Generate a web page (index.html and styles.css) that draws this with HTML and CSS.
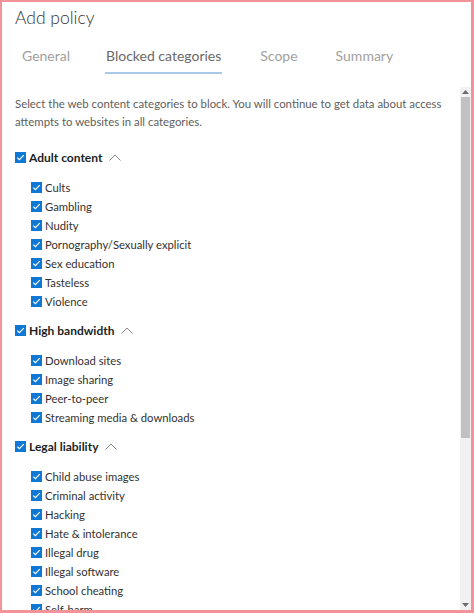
FILE: index.html
```html
<!DOCTYPE html>
<html>
<head>
<meta charset="utf-8">
<link rel="stylesheet" href="styles.css">
</head>
<body>
<div class="frame">
  <div class="head">
    <h1 class="title">Add policy</h1>
    <div class="tabs">
      <span class="tab">General</span>
      <span class="tab active">Blocked categories</span>
      <span class="tab">Scope</span>
      <span class="tab">Summary</span>
    </div>
  </div>
  <div class="main">
    <div class="content">
      <p class="desc">Select the web content categories to block. You will continue to get data about access attempts to websites in all categories.</p>

      <div class="group">
        <div class="ghead"><span class="cb"><svg viewBox="0 0 11 11"><path d="M2.3 5.6 L4.4 7.7 L8.8 3.2" /></svg></span><span class="glabel">Adult content</span><svg class="chev" viewBox="0 0 12 7"><path d="M0.5 6.5 L6 1 L11.5 6.5"/></svg></div>
        <ul class="items">
          <li><span class="cb"><svg viewBox="0 0 11 11"><path d="M2.3 5.6 L4.4 7.7 L8.8 3.2" /></svg></span>Cults</li>
          <li><span class="cb"><svg viewBox="0 0 11 11"><path d="M2.3 5.6 L4.4 7.7 L8.8 3.2" /></svg></span>Gambling</li>
          <li><span class="cb"><svg viewBox="0 0 11 11"><path d="M2.3 5.6 L4.4 7.7 L8.8 3.2" /></svg></span>Nudity</li>
          <li><span class="cb"><svg viewBox="0 0 11 11"><path d="M2.3 5.6 L4.4 7.7 L8.8 3.2" /></svg></span>Pornography/Sexually explicit</li>
          <li><span class="cb"><svg viewBox="0 0 11 11"><path d="M2.3 5.6 L4.4 7.7 L8.8 3.2" /></svg></span>Sex education</li>
          <li><span class="cb"><svg viewBox="0 0 11 11"><path d="M2.3 5.6 L4.4 7.7 L8.8 3.2" /></svg></span>Tasteless</li>
          <li><span class="cb"><svg viewBox="0 0 11 11"><path d="M2.3 5.6 L4.4 7.7 L8.8 3.2" /></svg></span>Violence</li>
        </ul>
      </div>

      <div class="group">
        <div class="ghead"><span class="cb"><svg viewBox="0 0 11 11"><path d="M2.3 5.6 L4.4 7.7 L8.8 3.2" /></svg></span><span class="glabel">High bandwidth</span><svg class="chev" viewBox="0 0 12 7"><path d="M0.5 6.5 L6 1 L11.5 6.5"/></svg></div>
        <ul class="items">
          <li><span class="cb"><svg viewBox="0 0 11 11"><path d="M2.3 5.6 L4.4 7.7 L8.8 3.2" /></svg></span>Download sites</li>
          <li><span class="cb"><svg viewBox="0 0 11 11"><path d="M2.3 5.6 L4.4 7.7 L8.8 3.2" /></svg></span>Image sharing</li>
          <li><span class="cb"><svg viewBox="0 0 11 11"><path d="M2.3 5.6 L4.4 7.7 L8.8 3.2" /></svg></span>Peer-to-peer</li>
          <li><span class="cb"><svg viewBox="0 0 11 11"><path d="M2.3 5.6 L4.4 7.7 L8.8 3.2" /></svg></span>Streaming media &amp; downloads</li>
        </ul>
      </div>

      <div class="group">
        <div class="ghead"><span class="cb"><svg viewBox="0 0 11 11"><path d="M2.3 5.6 L4.4 7.7 L8.8 3.2" /></svg></span><span class="glabel">Legal liability</span><svg class="chev" viewBox="0 0 12 7"><path d="M0.5 6.5 L6 1 L11.5 6.5"/></svg></div>
        <ul class="items">
          <li><span class="cb"><svg viewBox="0 0 11 11"><path d="M2.3 5.6 L4.4 7.7 L8.8 3.2" /></svg></span>Child abuse images</li>
          <li><span class="cb"><svg viewBox="0 0 11 11"><path d="M2.3 5.6 L4.4 7.7 L8.8 3.2" /></svg></span>Criminal activity</li>
          <li><span class="cb"><svg viewBox="0 0 11 11"><path d="M2.3 5.6 L4.4 7.7 L8.8 3.2" /></svg></span>Hacking</li>
          <li><span class="cb"><svg viewBox="0 0 11 11"><path d="M2.3 5.6 L4.4 7.7 L8.8 3.2" /></svg></span>Hate &amp; intolerance</li>
          <li><span class="cb"><svg viewBox="0 0 11 11"><path d="M2.3 5.6 L4.4 7.7 L8.8 3.2" /></svg></span>Illegal drug</li>
          <li><span class="cb"><svg viewBox="0 0 11 11"><path d="M2.3 5.6 L4.4 7.7 L8.8 3.2" /></svg></span>Illegal software</li>
          <li><span class="cb"><svg viewBox="0 0 11 11"><path d="M2.3 5.6 L4.4 7.7 L8.8 3.2" /></svg></span>School cheating</li>
          <li><span class="cb"><svg viewBox="0 0 11 11"><path d="M2.3 5.6 L4.4 7.7 L8.8 3.2" /></svg></span>Self-harm</li>
        </ul>
      </div>
    </div>
    <div class="scrollbar">
      <div class="sb-btn"><svg viewBox="0 0 7 4"><path d="M0 4 L3.5 0 L7 4 Z"/></svg></div>
      <div class="sb-track">
        <div class="sb-thumb"></div>
      </div>
      <div class="sb-btn"><svg viewBox="0 0 7 4"><path d="M0 0 L3.5 4 L7 0 Z"/></svg></div>
    </div>
  </div>
</div>
</body>
</html>
```
FILE: styles.css
```css
* { box-sizing: border-box; }
html, body { margin: 0; padding: 0; background: #ffffff; }
body { font-family: Lato, "Open Sans", sans-serif; color: #323130; }

.frame {
  width: 474px;
  height: 613px;
  border-left: 2px solid #f2939a;
  border-top: 2px solid #f2939a;
  border-right: 3px solid #f2939a;
  border-bottom: 3px solid #f2939a;
  display: flex;
  flex-direction: column;
  overflow: hidden;
  background: #fff;
}

.head { padding: 4px 0 0 13px; flex: none; }
.title {
  margin: 0;
  font-size: 17.5px;
  font-weight: 300;
  line-height: 24px;
  color: #323130;
}
.tabs {
  display: flex;
  margin-top: 16px;
  padding-left: 7px;
}
.tab {
  font-size: 14px;
  line-height: 20px;
  color: #a19f9d;
  padding-bottom: 6px;
  margin-right: 38px;
}
.tab:first-child { margin-right: 35px; }
.tab.active {
  color: #6b6967;
  font-weight: 400;
  padding: 0 1px 6px;
  border-bottom: 2px solid #a9c9ea;
}

.main {
  flex: 1;
  display: flex;
  min-height: 0;
  margin-top: 13px;
}
.content {
  flex: 1;
  overflow: hidden;
  padding: 8px 0 0 13px;
}
.desc {
  margin: 0;
  font-size: 11.4px;
  line-height: 18px;
  color: #605e5c;
  width: 440px;
}

.group { margin-top: 16px; }
.group + .group { margin-top: 9px; }
.ghead {
  display: flex;
  align-items: center;
  height: 20px;
  font-size: 12px;
  font-weight: 700;
  color: #201f1e;
}
.glabel { margin-left: 3px; }
.chev {
  width: 12px;
  height: 7px;
  margin-left: 7px;
  fill: none;
  stroke: #8a8886;
  stroke-width: 1;
}
.cb {
  width: 11px;
  height: 11px;
  background: #0f78d4;
  display: inline-flex;
  flex: none;
}
.cb svg {
  width: 11px;
  height: 11px;
  fill: none;
  stroke: #fff;
  stroke-width: 1.2;
}

.items {
  list-style: none;
  margin: 11px 0 0 16px;
  padding: 0;
}
.items li {
  display: flex;
  align-items: center;
  height: 19px;
  font-size: 11.25px;
  color: #323130;
}
.items li .cb { margin-right: 3px; }

.scrollbar {
  width: 11px;
  flex: none;
  display: flex;
  flex-direction: column;
  background: #f1f1f1;
}
.sb-btn {
  height: 10px;
  display: flex;
  align-items: center;
  justify-content: center;
  flex: none;
}
.sb-btn svg { width: 7px; height: 4px; fill: #6b6b6b; }
.sb-track { flex: 1; display: flex; flex-direction: column; }
.sb-thumb {
  height: 341px;
  background: #c1c1c1;
  margin: 0 1px;
}
```
